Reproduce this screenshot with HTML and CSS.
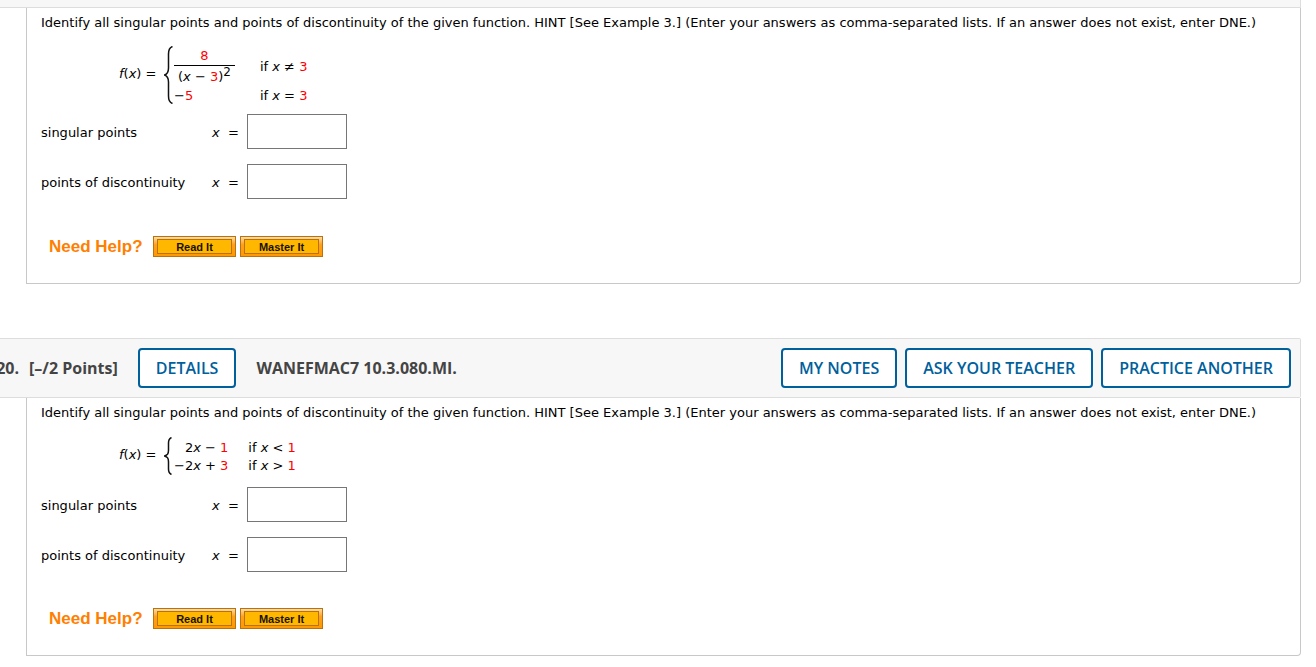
FILE: index.html
```html
<!DOCTYPE html>
<html lang="en">
<head>
<meta charset="utf-8">
<title>Assignment</title>
<link rel="stylesheet" href="styles.css">
</head>
<body>
<main class="page">
  <section class="question">
    <div class="bar-end"></div>
    <div class="panel">
      <p class="prompt">Identify all singular points and points of discontinuity of the given function. HINT [See Example 3.] (Enter your answers as comma-separated lists. If an answer does not exist, enter DNE.)</p>
      <div class="formula">
        <span class="lhs"><i>f</i>(<i>x</i>) =</span>
        <svg class="brace" viewBox="0 0 9 58" preserveAspectRatio="none" aria-hidden="true"><path d="M8.500 .5C5.500 1.500 4.500 4 4.500 8V22C4.500 26 3.500 28 .5 29C3.500 30 4.500 32 4.500 36V50C4.500 54 5.500 56.500 8.500 57.500"/></svg>
        <div class="cases">
          <span class="fraction"><span class="num red">8</span><span class="den">(<i>x</i> − <span class="red">3</span>)<sup>2</sup></span></span>
          <span class="cond">if <i>x</i> ≠ <span class="red">3</span></span>
          <span>−<span class="red">5</span></span>
          <span class="cond">if <i>x</i> = <span class="red">3</span></span>
        </div>
      </div>
      <div class="answers">
        <div class="answer"><label for="s1"><span class="name">singular points</span><span><i>x</i>&nbsp; =</span></label><input id="s1" type="text"></div>
        <div class="answer"><label for="d1"><span class="name">points of discontinuity</span><span><i>x</i>&nbsp; =</span></label><input id="d1" type="text"></div>
      </div>
      <div class="help">
        <span class="help-title">Need Help?</span>
        <button class="help-btn" type="button"><span>Read It</span></button>
        <button class="help-btn" type="button"><span>Master It</span></button>
      </div>
    </div>
  </section>

  <section class="question">
    <header class="bar">
      <span class="number">20.</span>
      <span class="points">[–/2 Points]</span>
      <button class="btn" type="button">DETAILS</button>
      <span class="code">WANEFMAC7 10.3.080.MI.</span>
      <div class="actions">
        <button class="btn" type="button">MY NOTES</button>
        <button class="btn" type="button">ASK YOUR TEACHER</button>
        <button class="btn" type="button">PRACTICE ANOTHER</button>
      </div>
    </header>
    <div class="panel">
      <p class="prompt">Identify all singular points and points of discontinuity of the given function. HINT [See Example 3.] (Enter your answers as comma-separated lists. If an answer does not exist, enter DNE.)</p>
      <div class="formula formula-short">
        <span class="lhs"><i>f</i>(<i>x</i>) =</span>
        <svg class="brace" viewBox="0 0 9 38" preserveAspectRatio="none" aria-hidden="true"><path d="M7.500 .5C5 1.500 4.500 3 4.500 6V13C4.500 17 3.500 18 .5 19C3.500 20 4.500 21 4.500 25V32C4.500 35 5 36.500 7.500 37.500"/></svg>
        <div class="cases cases-short">
          <span class="term">2<i>x</i> − <span class="red">1</span></span>
          <span class="cond">if <i>x</i> &lt; <span class="red">1</span></span>
          <span class="term">−2<i>x</i> + <span class="red">3</span></span>
          <span class="cond">if <i>x</i> &gt; <span class="red">1</span></span>
        </div>
      </div>
      <div class="answers">
        <div class="answer"><label for="s2"><span class="name">singular points</span><span><i>x</i>&nbsp; =</span></label><input id="s2" type="text"></div>
        <div class="answer"><label for="d2"><span class="name">points of discontinuity</span><span><i>x</i>&nbsp; =</span></label><input id="d2" type="text"></div>
      </div>
      <div class="help">
        <span class="help-title">Need Help?</span>
        <button class="help-btn" type="button"><span>Read It</span></button>
        <button class="help-btn" type="button"><span>Master It</span></button>
      </div>
    </div>
  </section>
</main>
</body>
</html>
```
FILE: styles.css
```css
* { box-sizing: border-box; }
body {
  margin: 0;
  background: #fff;
  color: #000;
  font: 13px/18px Verdana, "DejaVu Sans", sans-serif;
}
.page { padding-right: 15px; }
.question + .question { margin-top: 54px; }
.bar-end {
  height: 8px;
  background: #f7f7f7;
  border: solid #ddd;
  border-width: 0 1px 1px 0;
}
.bar {
  display: flex;
  align-items: center;
  height: 60px;
  padding-right: 9px;
  background: #f7f7f7;
  border: 1px solid #ddd;
  border-left: 0;
  border-radius: 0 2px 2px 0;
  color: #444;
  font: 700 16px/22px "Open Sans", sans-serif;
}
.number {
  display: flex;
  justify-content: flex-end;
  flex: none;
  width: 19px;
  margin-right: 10px;
}
.points { margin-right: 20px; }
.code { margin-left: 20px; }
.actions { display: flex; gap: 8px; margin-left: auto; }
.btn {
  height: 40px;
  padding: 0 16px;
  background: #fff;
  border: 2px solid #00609c;
  border-radius: 4px;
  color: #00609c;
  font: 600 16px/22px "Open Sans", sans-serif;
  white-space: nowrap;
}
.panel {
  margin-left: 26px;
  padding: 5px 14px 26px;
  border: 1px solid #c8c8c8;
  border-top: 0;
  border-radius: 0 0 4px 0;
}
.prompt { margin: 0 0 12px; line-height: 20px; }
.red { color: #f00; }
.formula {
  display: flex;
  align-items: center;
  height: 60px;
  padding-left: 78px;
}
.formula-short { height: 42px; }
.lhs { width: 45px; padding-bottom: 2px; white-space: nowrap; }
.brace {
  flex: none;
  width: 9px;
  height: 58px;
  fill: none;
  stroke: #111;
  stroke-width: 1.500;
}
.formula-short .brace { height: 38px; }
.cases {
  display: grid;
  grid-template-columns: auto auto;
  align-items: center;
  column-gap: 25px;
  margin-left: 1px;
  padding-top: 1px;
}
.cases-short { column-gap: 20px; }
.cases-short .term { text-align: right; }
.fraction { display: flex; flex-direction: column; text-align: center; }
.num { line-height: 19px; }
.den { padding: 1px 4px 0; border-top: 1px solid #000; line-height: 20px; }
sup { font-size: 12px; line-height: 0; vertical-align: 5px; }
.answers { display: grid; gap: 15px; margin-top: 10px; }
.formula:not(.formula-short) + .answers { margin-top: 9px; }
.answer { display: flex; align-items: center; }
.answer label { display: flex; width: 206px; padding-top: 3px; }
.name { width: 171px; }
.answer input {
  width: 100px;
  height: 35px;
  padding: 2px 6px;
  border: 1px solid #767676;
  border-radius: 0;
  background: #fff;
  font: inherit;
}
.help {
  display: flex;
  align-items: center;
  gap: 4px;
  margin-top: 37px;
  padding-left: 8px;
}
.formula-short ~ .help { margin-top: 36px; }
.help-title {
  width: 100px;
  color: #ff8000;
  font: 700 17px/21px "Liberation Sans", Arial, sans-serif;
}
.help-btn {
  width: 83px;
  height: 21px;
  padding: 2px 3px;
  border: 1px solid #b9720c;
  background: linear-gradient(#ffdca8, #ffa01c 40%, #ff9800);
  color: #1a1200;
  font: 700 11px/15px "Liberation Sans", Arial, sans-serif;
}
.help-btn span {
  display: block;
  height: 15px;
  border: 1px solid #b9720c;
  background: #ffb700;
}
```
